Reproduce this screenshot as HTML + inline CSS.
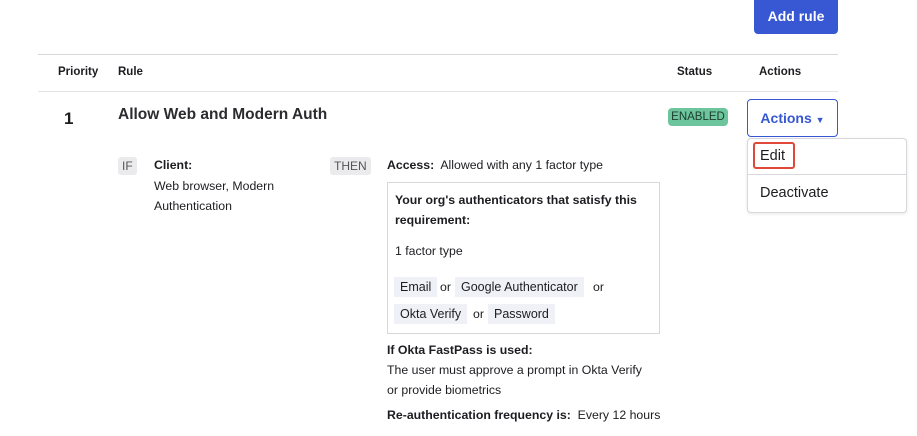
<!DOCTYPE html>
<html><head><style>
body{margin:0;width:917px;height:436px;overflow:hidden;background:#fff;font-family:"Liberation Sans",sans-serif;color:#1d1d21;position:relative}
.a{position:absolute;white-space:nowrap}
.tag{position:absolute;background:#ebebed;border-radius:3px;font-size:12px;color:#555;padding:2px 4px}
.chip{position:absolute;background:#f0f1f6;font-size:12.5px;padding:3px 6px;color:#1d1d21}
.s{font-size:12.3px}
</style></head><body>
<div class="a" style="left:754px;top:0;width:84px;height:34px;background:#3757d3;border-radius:0 0 4px 4px;color:#fff;font-weight:bold;font-size:14px;text-align:center;line-height:32px">Add rule</div>
<div class="a" style="left:38px;top:54px;width:800px;height:1px;background:#d7d7dc"></div>
<div class="a s" style="left:58px;top:66px;font-weight:bold;font-size:11.5px">Priority</div>
<div class="a s" style="left:118px;top:66px;font-weight:bold;font-size:11.5px">Rule</div>
<div class="a s" style="left:677px;top:66px;font-weight:bold;font-size:11.5px">Status</div>
<div class="a s" style="left:759px;top:66px;font-weight:bold;font-size:11.5px">Actions</div>
<div class="a" style="left:38px;top:91px;width:800px;height:1px;background:#e4e4e8"></div>
<div class="a" style="left:64px;top:109px;font-weight:bold;font-size:17px">1</div>
<div class="a" style="left:118px;top:106px;font-size:15.5px;font-weight:bold;color:#2c2c30">Allow Web and Modern Auth</div>
<div class="a" style="left:668px;top:108px;width:60px;height:18px;background:#6cc59d;border-radius:4px;font-size:11.5px;text-align:center;line-height:18px;color:#1d3b2d">ENABLED</div>
<div class="a" style="left:747px;top:99px;width:89px;height:36px;border:1px solid #3757d3;border-radius:4px;color:#3757d3;font-weight:bold;font-size:14px;line-height:36px;text-align:center">Actions <span style="font-size:9px">▼</span></div>
<div class="a" style="left:747px;top:138px;width:158px;height:73px;border:1px solid #d7d7dc;border-radius:4px;box-shadow:0 1px 3px rgba(0,0,0,.1);background:#fff"></div>
<div class="a" style="left:753px;top:142px;width:42px;height:27px;border:2px solid #e0483a;border-radius:3px;box-sizing:border-box"></div>
<div class="a" style="left:760px;top:148px;font-size:14.5px">Edit</div>
<div class="a" style="left:748px;top:174px;width:158px;height:1px;background:#d7d7dc"></div>
<div class="a" style="left:760px;top:185px;font-size:14.5px">Deactivate</div>
<div class="tag" style="left:118px;top:157px">IF</div>
<div class="a s" style="left:154px;top:158px;font-weight:bold">Client:</div>
<div class="a s" style="left:154px;top:179px">Web browser, Modern</div>
<div class="a s" style="left:154px;top:199px">Authentication</div>
<div class="tag" style="left:330px;top:157px">THEN</div>
<div class="a s" style="left:387px;top:158px"><b>Access:</b>&nbsp; Allowed with any 1 factor type</div>
<div class="a" style="left:387px;top:182px;width:271px;height:150px;border:1px solid #d7d7dc"></div>
<div class="a s" style="left:395px;top:190px;font-weight:bold;line-height:20px">Your org's authenticators that satisfy this<br>requirement:</div>
<div class="a s" style="left:395px;top:244px">1 factor type</div>
<div class="chip" style="left:394px;top:277px">Email</div>
<div class="a s" style="left:440px;top:280px">or</div>
<div class="chip" style="left:455px;top:277px">Google Authenticator</div>
<div class="a s" style="left:593px;top:280px">or</div>
<div class="chip" style="left:394px;top:304px">Okta Verify</div>
<div class="a s" style="left:473px;top:307px">or</div>
<div class="chip" style="left:488px;top:304px">Password</div>
<div class="a s" style="left:387px;top:343px;font-weight:bold">If Okta FastPass is used:</div>
<div class="a s" style="left:387px;top:363px">The user must approve a prompt in Okta Verify</div>
<div class="a s" style="left:387px;top:383px">or provide biometrics</div>
<div class="a s" style="left:387px;top:408px"><b>Re-authentication frequency is:</b>&nbsp; Every 12 hours</div>
</body></html>
